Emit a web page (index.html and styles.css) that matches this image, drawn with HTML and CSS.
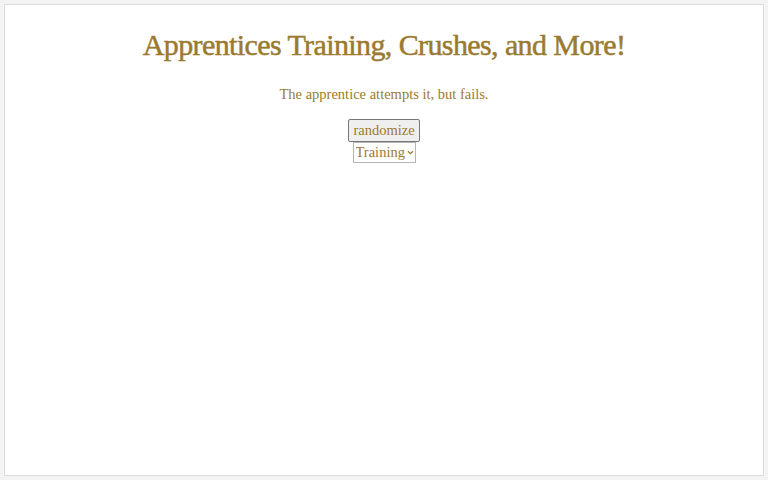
FILE: index.html
```html
<!DOCTYPE html>
<html lang="en">
<head>
<meta charset="utf-8">
<title>Apprentices Training, Crushes, and More!</title>
<link rel="stylesheet" href="styles.css">
</head>
<body>
<main class="card">
  <h1 class="title">Apprentices Training, Crushes, and More!</h1>
  <p class="line">The apprentice attempts it, but fails.</p>
  <div class="controls">
    <button class="btn" type="button">randomize</button>
    <span class="pick-wrap">
      <select class="pick">
        <option>Training</option>
        <option>Crushes</option>
        <option>More</option>
      </select>
      <svg class="chev" width="7" height="5" viewBox="0 0 7 5" aria-hidden="true">
        <path d="M1 1.2 L3.5 3.6 L6 1.2" fill="none" stroke="#9b7a2f" stroke-width="1.3"/>
      </svg>
    </span>
  </div>
</main>
</body>
</html>
```
FILE: styles.css
```css
html, body {
  margin: 0;
  height: 100%;
}

body {
  background: #f3f3f3;
  padding: 4px;
  box-sizing: border-box;
  font-family: "Liberation Serif", "DejaVu Serif", serif;
  color: #9b7a2f;
}

.card {
  height: 100%;
  box-sizing: border-box;
  background: #fff;
  border: 1px solid #dcdcdc;
  text-align: center;
  padding-top: 22px;
}

.title {
  margin: 0;
  font-size: 30px;
  font-weight: normal;
  letter-spacing: -0.6px;
  line-height: 36px;
  -webkit-text-stroke: 0.5px #9b7a2f;
}

.line {
  margin: 21px 0 0;
  font-size: 14.5px;
  line-height: 20px;
}

.controls {
  margin-top: 15px;
  display: flex;
  flex-direction: column;
  align-items: center;
}

.btn {
  font-family: inherit;
  font-size: 14.5px;
  color: #9b7a2f;
  background: #efefef;
  border: 1px solid #767676;
  border-radius: 2px;
  padding: 0 4px;
  height: 23px;
}

.pick-wrap {
  position: relative;
  display: inline-block;
  height: 21px;
}

.pick {
  -webkit-appearance: none;
  appearance: none;
  font-family: inherit;
  font-size: 14.5px;
  color: #9b7a2f;
  background: #fff;
  border: 1px solid #b5b5b5;
  border-radius: 0;
  height: 21px;
  line-height: 19px;
  padding: 0 9px 0 2px;
  margin: 0;
}

.chev {
  position: absolute;
  right: 2px;
  top: 8px;
  pointer-events: none;
}
```
